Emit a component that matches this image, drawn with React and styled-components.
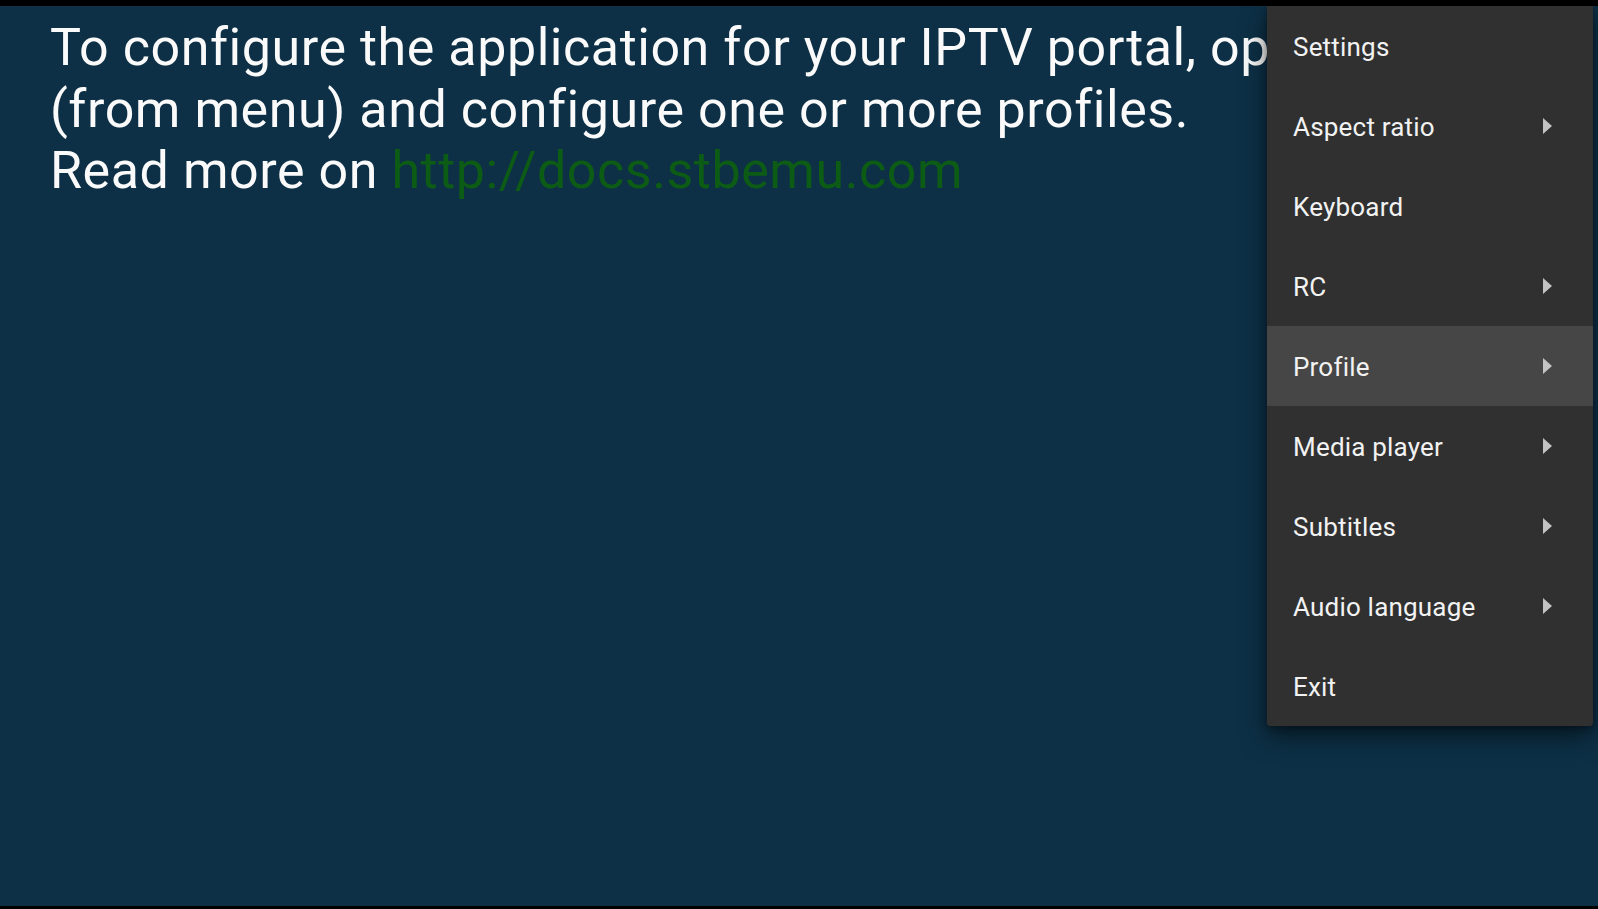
import React from 'react';
import styled, { createGlobalStyle } from 'styled-components';

const GlobalStyle = createGlobalStyle`
  html, body {
    margin: 0;
    padding: 0;
    background: #000;
  }
  body {
    font-family: Roboto, "Noto Sans", sans-serif;
  }
`;

const Screen = styled.div`
  width: 1598px;
  height: 909px;
  display: flex;
  flex-direction: column;
  background: #000;
  overflow: hidden;
`;

const Bar = styled.div`
  height: ${(p) => p.$h}px;
  flex: 0 0 auto;
  background: #000;
`;

const Stage = styled.main`
  position: relative;
  flex: 1;
  background: #0d3046;
  padding: 11px 0 0 50px;
`;

const Intro = styled.p`
  margin: 0;
  font-size: 52px;
  line-height: 61.5px;
  letter-spacing: 0.55px;
  color: #fafafa;
  white-space: nowrap;
`;

const Link = styled.span`
  color: #0d5c16;
`;

const Menu = styled.ul`
  position: absolute;
  top: 0;
  right: 5px;
  width: 326px;
  margin: 0;
  padding: 0;
  list-style: none;
  background: #303030;
  border-radius: 0 0 3px 3px;
  box-shadow: 0 10px 26px rgba(0, 0, 0, 0.55), 0 2px 6px rgba(0, 0, 0, 0.3);
`;

const Item = styled.li`
  height: 80px;
  display: flex;
  align-items: center;
  justify-content: space-between;
  padding: 2px 41px 0 26px;
  box-sizing: border-box;
  font-size: 26px;
  letter-spacing: 0.2px;
  color: #f2f2f2;
  background: ${(p) => (p.$active ? '#464646' : 'transparent')};
`;

const Arrow = styled.span`
  width: 0;
  height: 0;
  margin-top: -2px;
  border-top: 8px solid transparent;
  border-bottom: 8px solid transparent;
  border-left: 9px solid #c4c4c4;
`;

const items = [
  { label: 'Settings' },
  { label: 'Aspect ratio', sub: true },
  { label: 'Keyboard' },
  { label: 'RC', sub: true },
  { label: 'Profile', sub: true, active: true },
  { label: 'Media player', sub: true },
  { label: 'Subtitles', sub: true },
  { label: 'Audio language', sub: true },
  { label: 'Exit' },
];

export default function App() {
  return (
    <Screen>
      <GlobalStyle />
      <Bar $h={6} />
      <Stage>
        <Intro>
          To configure the application for your IPTV portal, open Settings
          <br />
          (from menu) and configure one or more profiles.
          <br />
          Read more on <Link>http://docs.stbemu.com</Link>
        </Intro>
        <Menu>
          {items.map((it) => (
            <Item key={it.label} $active={it.active}>
              <span>{it.label}</span>
              {it.sub && <Arrow />}
            </Item>
          ))}
        </Menu>
      </Stage>
      <Bar $h={3} />
    </Screen>
  );
}
